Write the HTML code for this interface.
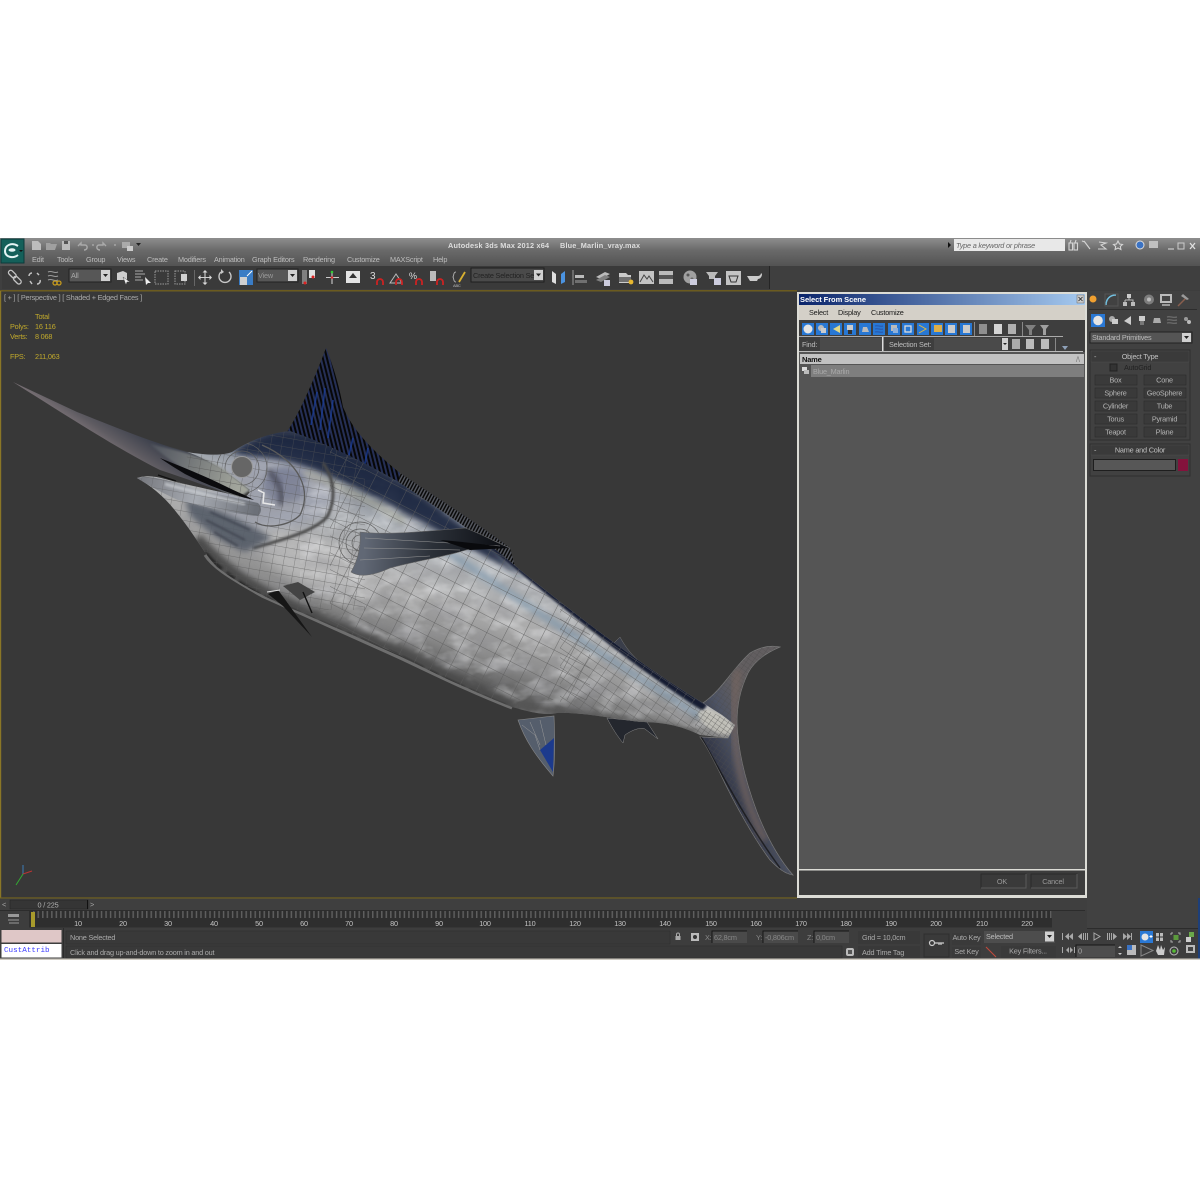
<!DOCTYPE html>
<html><head><meta charset="utf-8"><title>Autodesk 3ds Max 2012</title>
<style>
html,body{margin:0;padding:0;background:#fff;width:1200px;height:1200px;overflow:hidden}
svg{display:block;position:absolute;left:0;top:0;filter:blur(.32px)}
text{font-family:"Liberation Sans",sans-serif;font-size:7.3px;fill:#c4c4c4;letter-spacing:-.2px}
.m{fill:#bdbdbd}.d{fill:#b4b4b4}.c{text-anchor:middle}
.y{fill:#c2aa2c}.g{fill:#8f8f8f}.k{fill:#1a1a1a}
.i{fill:#cfcfcf}.w{fill:#e8e8e8}.b{fill:#2f7fd8}
</style></head><body>
<svg width="1200" height="1200" viewBox="0 0 1200 1200" xmlns="http://www.w3.org/2000/svg">
<defs>
<linearGradient id="tb" x1="0" y1="0" x2="0" y2="1"><stop offset="0" stop-color="#8e8e8e"/><stop offset=".45" stop-color="#696969"/><stop offset="1" stop-color="#535353"/></linearGradient>
<linearGradient id="ttl" x1="0" y1="0" x2="1" y2="0"><stop offset="0" stop-color="#0a246a"/><stop offset="1" stop-color="#a6caf0"/></linearGradient>
<linearGradient id="body" gradientUnits="userSpaceOnUse" x1="400" y1="480" x2="345" y2="640"><stop offset="0" stop-color="#3a4254"/><stop offset=".12" stop-color="#7c8492"/><stop offset=".3" stop-color="#b4b8bc"/><stop offset=".58" stop-color="#ababab"/><stop offset=".82" stop-color="#8a8a8a"/><stop offset="1" stop-color="#575757"/></linearGradient>
<linearGradient id="bill" gradientUnits="userSpaceOnUse" x1="130" y1="425" x2="105" y2="462"><stop offset="0" stop-color="#3c404c"/><stop offset=".45" stop-color="#5f5c62"/><stop offset=".8" stop-color="#857a7e"/><stop offset="1" stop-color="#5f5b5d"/></linearGradient>
<linearGradient id="snout" gradientUnits="userSpaceOnUse" x1="150" y1="445" x2="240" y2="480"><stop offset="0" stop-color="#4e525c"/><stop offset="1" stop-color="#a2a59c"/></linearGradient>
<linearGradient id="jaw" gradientUnits="userSpaceOnUse" x1="140" y1="478" x2="255" y2="510"><stop offset="0" stop-color="#77797f"/><stop offset=".5" stop-color="#a7abb2"/><stop offset="1" stop-color="#6c7078"/></linearGradient>
<linearGradient id="tail" gradientUnits="userSpaceOnUse" x1="715" y1="760" x2="760" y2="740"><stop offset="0" stop-color="#343848"/><stop offset=".5" stop-color="#4d5364"/><stop offset="1" stop-color="#625e60"/></linearGradient>
<linearGradient id="fin" gradientUnits="userSpaceOnUse" x1="365" y1="540" x2="500" y2="550"><stop offset="0" stop-color="#616875"/><stop offset=".5" stop-color="#2b3038"/><stop offset="1" stop-color="#0d0f14"/></linearGradient>
<pattern id="gr" width="17" height="15" patternUnits="userSpaceOnUse" patternTransform="rotate(27 400 560)"><path d="M0 0H17M0 0V15" stroke="#5c5c5c" stroke-width=".8" fill="none"/></pattern>
<pattern id="gr2" width="10" height="8" patternUnits="userSpaceOnUse" patternTransform="rotate(34 600 660)"><path d="M0 0H10M0 0V8" stroke="#606060" stroke-width=".7" fill="none"/></pattern>
<pattern id="gr3" width="5" height="4" patternUnits="userSpaceOnUse" patternTransform="rotate(35 700 710)"><path d="M0 0H5M0 0V4" stroke="#4c4c4c" stroke-width=".6" fill="none"/></pattern>
<pattern id="gh" width="11" height="9" patternUnits="userSpaceOnUse" patternTransform="rotate(10 250 480)"><path d="M0 0H11M0 0V9" stroke="#565656" stroke-width=".7" fill="none"/></pattern>
<pattern id="ha" width="4" height="8" patternUnits="userSpaceOnUse" patternTransform="rotate(-14 350 430)"><rect width="2" height="8" fill="#070707"/><rect x="2" width="2" height="8" fill="#252f55"/></pattern>
<pattern id="ha2" width="3" height="8" patternUnits="userSpaceOnUse" patternTransform="rotate(28 440 500)"><rect width="1.5" height="8" fill="#0a0a0a"/><rect x="1.5" width="1.5" height="8" fill="#54575f"/></pattern>
<pattern id="tk" x="33" y="0" width="4.52" height="8" patternUnits="userSpaceOnUse"><rect width="1.5" height="8" fill="#5e5e5e"/></pattern>
<filter id="b1"><feGaussianBlur stdDeviation="1"/></filter>
<filter id="b3"><feGaussianBlur stdDeviation="3"/></filter>
<filter id="b6"><feGaussianBlur stdDeviation="6"/></filter>
<filter id="mot" x="0" y="0" width="100%" height="100%"><feTurbulence type="fractalNoise" baseFrequency=".04 .07" numOctaves="3" seed="4"/><feColorMatrix values="0 0 0 0 .92  0 0 0 0 .93  0 0 0 0 .95  2.6 0 0 0 -1.05"/></filter>
<filter id="mod" x="0" y="0" width="100%" height="100%"><feTurbulence type="fractalNoise" baseFrequency=".03 .05" numOctaves="3" seed="11"/><feColorMatrix values="0 0 0 0 .3  0 0 0 0 .3  0 0 0 0 .32  2.4 0 0 0 -1"/></filter>
<clipPath id="cb"><path d="M187,452 C205,455 222,456 232,452 C250,440 270,433 290,431 C330,445 370,465 400,483 C440,510 480,535 520,570 C570,610 640,665 703,703 L722,715 L735,725 L728,738 L700,735 C680,725 660,722 640,722 C610,718 580,712 557,713 C545,716 530,712 512,707 C470,690 430,672 400,655 C370,642 335,628 300,612 C270,600 240,585 217,567 C205,555 195,535 177,513 C165,497 150,485 137,478 C145,475 155,476 165,479 C190,486 215,490 245,498 L250,492 L215,470 C200,462 195,456 187,452Z"/></clipPath>
<clipPath id="ctail"><path d="M703,703 C722,690 733,668 750,653 C760,647 770,645 780,647 C768,652 755,660 748,673 C740,690 737,705 737,723 C738,750 745,780 757,812 C768,840 780,860 793,875 C785,874 778,868 770,860 C755,840 735,805 720,773 C712,757 706,745 700,737 L728,738 L735,725Z"/></clipPath>
</defs>

<!-- app chrome -->
<rect x="0" y="238" width="1200" height="722" fill="#3d3d3d"/>
<rect x="0" y="238" width="1200" height="28" fill="url(#tb)"/>
<rect x="0" y="266" width="1200" height="24" fill="#3f3f3f"/>
<rect x="2" y="266" width="768" height="23" fill="#3a3a3a"/>
<rect x="769" y="266" width="1" height="23" fill="#252525"/>
<rect x="0" y="290" width="797" height="1.5" fill="#6b5b1f"/>

<!-- viewport -->
<rect x="0" y="292" width="797" height="606" fill="#383838"/>
<rect x="0" y="291" width="1.2" height="607" fill="#8a7626"/>
<rect x="0" y="897.4" width="797" height="1.3" fill="#76651f"/>
<text x="4" y="300" style="fill:#aaa">[ + ] [ Perspective ] [ Shaded + Edged Faces ]</text>
<text x="35" y="319" class="y">Total</text>
<text x="10" y="329" class="y">Polys:</text><text x="35" y="329" class="y">16 116</text>
<text x="10" y="339" class="y">Verts:</text><text x="35" y="339" class="y">8 068</text>
<text x="10" y="359" class="y">FPS:</text><text x="35" y="359" class="y">211,063</text>
<path d="M23 874V865" stroke="#3c7bb8" fill="none"/><path d="M23 874L32 871" stroke="#b33" fill="none"/><path d="M23 874L16 885" stroke="#3a3" fill="none"/>

<!-- FISH -->
<path d="M287,432 C298,415 312,385 326,348 C333,365 339,385 343,407 C352,428 368,447 400,473 C440,500 480,525 510,548 L490,546 C440,515 380,480 340,455 C320,445 300,437 287,432Z" fill="url(#ha)"/>
<path d="M400,473 C440,500 480,525 510,548 L515,566 C470,530 430,505 398,485Z" fill="url(#ha2)"/>
<g stroke="#1a3fa0" stroke-width="1.800" fill="none" opacity=".7"><path d="M317,392L311,425"/><path d="M325,388L320,430"/><path d="M333,400L328,438"/><path d="M353,438L349,455"/><path d="M368,448L364,468"/></g>
<path d="M500,560 C560,605 640,665 680,690" stroke="#4a4f5a" stroke-width="1" fill="none"/>
<path d="M612,645 L620,637 C628,652 640,665 658,674 L640,672 C630,665 620,655 612,645Z" fill="#3a3e4a" stroke="#777" stroke-width=".5"/>
<path d="M518,720 C525,740 535,755 553,776 C555,760 555,740 554,716Z" fill="#555e6c" stroke="#888" stroke-width=".6"/>
<path d="M540,750 L553,772 L554,738Z" fill="#1c3a8d"/>
<path d="M522,725 L535,735 L540,750 M530,722 L540,745 M540,720 L546,745" stroke="#999" stroke-width=".5" fill="none"/>
<path d="M607,718 C612,728 618,737 623,743 L625,735 C632,730 640,727 645,729 L658,739 L647,722Z" fill="#24272e" stroke="#888" stroke-width=".5"/>
<path d="M205,555 C212,566 225,575 262,596 L400,658 C430,672 470,692 512,708" fill="none" stroke="#6e6e6e" stroke-width="3"/>
<path d="M703,703 C722,690 733,668 750,653 C760,647 770,645 780,647 C768,652 755,660 748,673 C740,690 737,705 737,723 C738,750 745,780 757,812 C768,840 780,860 793,875 C785,874 778,868 770,860 C755,840 735,805 720,773 C712,757 706,745 700,737 L728,738 L735,725Z" fill="url(#tail)" stroke="#7a7a7a" stroke-width=".7"/>
<g clip-path="url(#ctail)"><rect x="690" y="640" width="110" height="240" fill="url(#gr3)"/>
<path d="M738,670 C735,690 733,710 735,735 C737,770 748,810 765,840" stroke="#776660" stroke-width="7" fill="none" filter="url(#b3)" opacity=".7"/>
<path d="M700,735 C720,770 745,820 780,868" stroke="#111" stroke-width="1.500" fill="none" opacity=".7"/></g>
<!-- body -->
<path d="M187,452 C205,455 222,456 232,452 C250,440 270,433 290,431 C330,445 370,465 400,483 C440,510 480,535 520,570 C570,610 640,665 703,703 L722,715 L735,725 L728,738 L700,735 C680,725 660,722 640,722 C610,718 580,712 557,713 C545,716 530,712 512,707 C470,690 430,672 400,655 C370,642 335,628 300,612 C270,600 240,585 217,567 C205,555 195,535 177,513 C165,497 150,485 137,478 C145,475 155,476 165,479 C190,486 215,490 245,498 L250,492 L215,470 C200,462 195,456 187,452Z" fill="url(#body)"/>
<g clip-path="url(#cb)">
 <ellipse cx="275" cy="490" rx="60" ry="40" fill="#a0a4b0" filter="url(#b6)"/>
 <ellipse cx="285" cy="485" rx="22" ry="18" fill="#7e8398" filter="url(#b3)"/>
 <ellipse cx="320" cy="565" rx="65" ry="24" transform="rotate(25 320 565)" fill="#b8b8b8" filter="url(#b6)"/>
 <rect x="300" y="480" width="430" height="260" filter="url(#mot)" opacity=".38"/>
 <rect x="180" y="470" width="550" height="270" filter="url(#mod)" opacity=".42"/>
 <!-- dark back wedge -->
 <path d="M232,452 C260,432 290,428 330,443 L410,488 L480,538 L525,578 L470,548 L400,510 C360,488 320,470 290,462 C270,456 250,458 232,452Z" fill="#1c2640" filter="url(#b3)" opacity=".92"/>
 <path d="M480,535 C560,600 630,660 705,708" fill="none" stroke="#141a30" stroke-width="8" filter="url(#b1)"/>
 <path d="M305,472 C340,486 370,500 405,522" fill="none" stroke="#b2b296" stroke-width="7" filter="url(#b3)" opacity=".4"/>
 <path d="M430,540 C490,580 570,635 700,716" fill="none" stroke="#7f98ad" stroke-width="7" filter="url(#b3)" opacity=".7"/>
 <!-- belly shade -->
 <path d="M195,540 C225,575 262,596 300,612 C335,628 370,642 400,655 C440,675 480,695 512,707" fill="none" stroke="#4c4c4c" stroke-width="16" filter="url(#b3)"/>
 <path d="M205,552 C225,577 262,598 300,614 C335,630 370,644 400,657 C440,677 480,697 512,709" fill="none" stroke="#1e1e1e" stroke-width="3" stroke-dasharray="24 6 10 5" filter="url(#b1)" opacity=".85"/>
 <path d="M520,706 C570,712 640,722 695,733" fill="none" stroke="#555" stroke-width="6" filter="url(#b3)"/>
 <!-- mesh -->
 <rect x="130" y="420" width="235" height="190" fill="url(#gh)" opacity=".8"/>
 <rect x="330" y="440" width="260" height="260" fill="url(#gr)"/>
 <rect x="560" y="600" width="135" height="135" fill="url(#gr2)"/>
 <ellipse cx="716" cy="722" rx="20" ry="9" transform="rotate(30 716 722)" fill="#cfcdc4" filter="url(#b1)" opacity=".7"/>
 <path d="M695,705 L740,725 L728,740 L695,735Z" fill="url(#gr3)"/>
 <!-- gill -->
 <path d="M323,463 C335,480 336,500 327,517 C315,530 290,538 253,548" fill="none" stroke="#484848" stroke-width="3" filter="url(#b1)"/>
 <path d="M262,445 C300,462 312,490 300,515 C290,525 268,530 255,522" fill="none" stroke="#5a5a5a" stroke-width="1.300"/>
 <path d="M185,500 C215,505 250,525 272,538 L245,552 C225,545 205,530 190,515Z" fill="#555b68" filter="url(#b3)" opacity=".9"/>
 <g stroke="#3d424d" stroke-width="1.600" fill="none" filter="url(#b1)"><path d="M210,512 L250,530"/><path d="M206,520 L245,540"/><path d="M214,532 L238,546"/></g>
 <path d="M268,470 C278,480 285,495 280,505" fill="none" stroke="#33333d" stroke-width="3.500" filter="url(#b3)"/>
 <g fill="none" stroke="#5c5c5c" stroke-width=".7"><circle cx="360" cy="543" r="8"/><circle cx="360" cy="543" r="14"/><circle cx="360" cy="543" r="21"/><circle cx="242" cy="468" r="17"/><circle cx="242" cy="468" r="25"/></g>
</g>
<!-- bill -->
<path d="M13,382 L77,412 C110,425 150,442 187,452 C205,458 225,470 250,490 L240,497 C210,488 185,478 160,470 C120,450 70,418 13,382Z" fill="url(#bill)"/>
<path d="M150,444 C175,450 205,456 225,470 L250,490 L240,497 C215,488 185,474 150,444Z" fill="url(#snout)" filter="url(#b1)"/>
<path d="M186,452 C205,456 225,470 250,490 L240,497 C220,490 205,484 190,478Z" fill="url(#gh)"/>
<path d="M160,458 C180,466 205,476 225,486 C235,491 245,495 254,500 C235,496 205,484 185,474 C175,468 167,463 160,458Z" fill="#0b0b0e"/>
<path d="M158,475 L176,481" stroke="#111" stroke-width="1.300" fill="none"/>
<!-- lower jaw -->
<path d="M137,478 C150,475 165,479 195,489 L258,503 C262,507 262,512 258,516 C235,514 205,507 178,500 C160,492 148,485 137,478Z" fill="url(#jaw)"/>
<path d="M165,484 C190,491 215,497 245,504" stroke="#cfd2d6" stroke-width="3" fill="none" filter="url(#b1)" opacity=".7"/>
<path d="M137,478 C150,475 165,479 195,489 L258,503 C262,507 262,512 258,516 C235,514 205,507 178,500 C160,492 148,485 137,478Z" fill="url(#gh)" opacity=".6"/>
<path d="M258,490 L264,493 L263,503 L275,505" stroke="#e8e8e8" stroke-width="1.500" fill="none"/>
<circle cx="242" cy="467" r="10.500" fill="#666" stroke="#9a9a9a" stroke-width="1"/>
<!-- pectoral -->
<path d="M360,532 C385,535 420,532 465,528 C480,533 495,542 510,548 L478,546 C455,555 420,560 390,568 C375,575 360,578 351,572 C358,560 361,546 360,532Z" fill="url(#fin)" stroke="#666" stroke-width=".6"/>
<path d="M365,538 L500,546 M364,548 L460,550 M360,560 L430,556" stroke="#999" stroke-width=".5" fill="none"/>
<path d="M440,540 C465,542 490,545 510,548 L470,550Z" fill="#090a0d"/>
<path d="M283,586 L298,582 L315,592 L300,600Z" fill="#444"/>
<path d="M268,594 L278,590 L284,598 L312,637 L283,606Z" fill="#161616"/>
<path d="M303,592 L312,613" stroke="#111" stroke-width="1.400" fill="none"/>
<path d="M267,592L280,590" stroke="#ddd" stroke-width="1" fill="none"/>

<!-- logo + QAT -->
<rect x="1" y="239" width="23" height="24" fill="#14605a" stroke="#0c3a3a"/>
<path d="M18,246 C12,242 5,245 5,251 C5,257 13,259 18,255" fill="none" stroke="#e4f4f4" stroke-width="2"/><ellipse cx="12" cy="250" rx="3.500" ry="1.800" fill="#e4f4f4"/>
<path d="M19 250h4l-2 2z" fill="#111"/>
<path d="M32 241h6l3 3v6H32z" fill="#bdbdbd"/><path d="M46 243h4l1 1h6l-2 6H46z" fill="#a0a0a0"/><path d="M62 241h8v9H62z" fill="#bbb"/><rect x="64" y="241" width="4" height="3" fill="#555"/>
<path d="M78 246l3-3v2h4c3 0 3 5-1 5" fill="none" stroke="#aaa" stroke-width="1.400"/><path d="M92 245h2" stroke="#bbb"/>
<path d="M106 246l-3-3v2h-4c-3 0-3 5 1 5" fill="none" stroke="#aaa" stroke-width="1.400"/><path d="M114 245h2" stroke="#bbb"/>
<rect x="122" y="242" width="8" height="6" fill="#aaa"/><rect x="127" y="246" width="6" height="5" fill="#ccc"/>
<path d="M136 243h5l-2.500 3z" fill="#222"/>
<text x="448" y="248" style="font-weight:bold;fill:#dedede;letter-spacing:0" textLength="101">Autodesk 3ds Max  2012 x64</text>
<text x="560" y="248" style="font-weight:bold;fill:#dedede;letter-spacing:0" textLength="80">Blue_Marlin_vray.max</text>
<path d="M948 242l3 3-3 3z" fill="#111"/>
<rect x="954" y="239" width="111" height="12" fill="#e8e8e8"/>
<text x="956" y="248" style="font-style:italic;fill:#666">Type a keyword or phrase</text>
<g fill="none" stroke="#d4d4d4" stroke-width="1.100"><rect x="1069" y="243" width="3.500" height="7"/><rect x="1074" y="243" width="3.500" height="7"/><path d="M1070 243l1-3M1075 243l1-3"/><path d="M1084 241l3 4 3 4M1082 241l3 1"/><path d="M1099 242l7 1-5 2 5 4h-8"/><path d="M1118 241l1.500 3 3 .500-2.200 2 .6 3-2.900-1.500-2.900 1.500 .6-3-2.200-2 3-.500z"/></g>
<circle cx="1140" cy="245" r="4" fill="#3b73c4" stroke="#ddd"/><rect x="1149" y="241" width="9" height="7" fill="#c0c0c0"/>
<path d="M1168 249h6" stroke="#ccc" stroke-width="1.200"/><rect x="1178" y="243" width="6" height="6" fill="none" stroke="#ccc"/><path d="M1190 243l5 6m0-6l-5 6" stroke="#e0e0e0" stroke-width="1.300"/>
<text x="32" y="262" class="m">Edit</text><text x="57" y="262" class="m">Tools</text><text x="86" y="262" class="m">Group</text><text x="117" y="262" class="m">Views</text><text x="147" y="262" class="m">Create</text><text x="178" y="262" class="m">Modifiers</text><text x="214" y="262" class="m">Animation</text><text x="252" y="262" class="m">Graph Editors</text><text x="303" y="262" class="m">Rendering</text><text x="347" y="262" class="m">Customize</text><text x="390" y="262" class="m">MAXScript</text><text x="433" y="262" class="m">Help</text>

<!-- main toolbar -->
<g fill="none" stroke="#c4c4c4" stroke-width="1.300">
<rect x="8" y="272" width="9" height="4.500" rx="2.200" transform="rotate(45 12.500 274)"/>
<rect x="13" y="278" width="9" height="4.500" rx="2.200" transform="rotate(45 17.500 280)"/>
<path d="M29 276a3 3 0 0 1 3-3m8 7a3 3 0 0 1-3 4m-7-3l2 3m7-9l-2-2" stroke-width="1.500"/>
<path d="M48 272c4-2 6 2 10 0m-10 4c4-2 6 2 10 0m-10 4c4-2 6 2 10 0" stroke="#9a9a9a" stroke-width="1"/><circle cx="55" cy="283" r="2" stroke="#c69a1d"/><circle cx="59" cy="283" r="2" stroke="#c69a1d"/>
</g>
<rect x="69" y="269" width="42" height="13" fill="#575757" stroke="#222"/><text x="71" y="278" style="fill:#aaa">All</text><rect x="101" y="270" width="9" height="11" fill="#d0d0d0"/><path d="M103 274h5l-2.500 3z" fill="#222"/>
<path d="M117 273l6-2 4 2v7h-10z" fill="#cfcfcf"/><path d="M123 277l3 8 1-3 3 0z" fill="#eee" stroke="#333" stroke-width=".4"/>
<path d="M135 271h8M135 274h10M135 277h6M135 280h8" stroke="#aaa" stroke-width="1"/><path d="M145 277l1 8 2-2 3 0z" fill="#eee"/>
<rect x="155" y="271" width="13" height="13" fill="none" stroke="#999" stroke-dasharray="1.500 1"/>
<rect x="175" y="271" width="10" height="13" fill="none" stroke="#999" stroke-dasharray="1.500 1"/><rect x="181" y="274" width="6" height="7" fill="#d0d0d0"/>
<rect x="194" y="270" width="1" height="16" fill="#666"/>
<path d="M205 272v11M200 277.500h11" stroke="#d0d0d0" stroke-width="1.100"/><path d="M205 270l2.500 2.500h-5zM205 285l2.500-2.500h-5zM198 277.500l2.500-2.500v5zM212 277.500l-2.500-2.500v5z" fill="#d8d8d8"/>
<path d="M229 272a6 6 0 1 1-8 0" fill="none" stroke="#c8c8c8" stroke-width="1.400"/><path d="M221 269l3 3-3 2z" fill="#c8c8c8"/>
<rect x="239" y="270" width="14" height="15" fill="#3a7cc5"/><rect x="240" y="277" width="7" height="8" fill="#d0d0d0"/><path d="M247 276l5-5" stroke="#fff"/>
<rect x="257" y="269" width="41" height="13" fill="#575757" stroke="#222"/><text x="258" y="278" style="fill:#999">View</text><rect x="288" y="270" width="9" height="11" fill="#d0d0d0"/><path d="M290 274h5l-2.500 3z" fill="#222"/>
<rect x="302" y="270" width="5" height="14" fill="#808080"/><rect x="309" y="270" width="6" height="8" fill="#e0e0e0"/><circle cx="305" cy="283" r="1.500" fill="#d22"/><circle cx="313" cy="277" r="1.500" fill="#d22"/>
<path d="M332 271v13M326 277.500h13" stroke="#ccc" stroke-width="1.100"/><circle cx="332" cy="272" r="1.300" fill="#3c3"/><circle cx="332" cy="277.500" r="1.300" fill="#d33"/>
<rect x="346" y="271" width="14" height="12" fill="#e4e4e4"/><path d="M353 273l4 5h-8z" fill="#333"/>
<text x="370" y="279" style="font-size:10px;fill:#ddd">3</text>
<path d="M377 285v-3a3 3 0 0 1 6 0v3" fill="none" stroke="#c22" stroke-width="1.800"/>
<path d="M390 283l6-9 6 9z" fill="none" stroke="#bbb"/><path d="M396 285v-3a3 3 0 0 1 6 0v3" fill="none" stroke="#c22" stroke-width="1.800"/>
<text x="409" y="279" style="font-size:9px;fill:#ddd">%</text><path d="M416 285v-3a3 3 0 0 1 6 0v3" fill="none" stroke="#c22" stroke-width="1.800"/>
<rect x="430" y="271" width="6" height="10" fill="#bbb"/><path d="M437 285v-3a3 3 0 0 1 6 0v3" fill="none" stroke="#c22" stroke-width="1.800"/>
<path d="M456 272c-3 0-2 4-3 5 1 1 0 5 3 5" fill="none" stroke="#aaa"/><path d="M459 282l6-10" stroke="#d8b030" stroke-width="1.800"/><text x="453" y="287" style="font-size:4px;fill:#bbb">ABC</text>
<rect x="471" y="268" width="73" height="14" fill="#4a4a4a" stroke="#1e1e1e"/><text x="473" y="278" style="fill:#222">Create Selection Se</text><rect x="534" y="270" width="9" height="10" fill="#d0d0d0"/><path d="M536 273.500h5l-2.500 3z" fill="#222"/>
<path d="M552 271l4 3v10l-4-2z" fill="#dedede"/><path d="M565 271l-4 3v10l4-2z" fill="#4b93e0"/>
<path d="M573 270v15" stroke="#999"/><rect x="575" y="275" width="9" height="3" fill="#bbb"/><rect x="575" y="280" width="12" height="3" fill="#707070"/>
<path d="M596 277l9-5 5 2-9 5z" fill="#bbb"/><path d="M596 280l9-5 5 2-9 5z" fill="#808080"/><rect x="604" y="280" width="6" height="6" fill="#ccd"/>
<path d="M619 273h7l2 2h3v8h-12z" fill="#ccc"/><rect x="619" y="277" width="12" height="5" fill="#707070"/><circle cx="631" cy="282" r="2.400" fill="#e8b830"/>
<rect x="639" y="271" width="15" height="13" fill="#c4c4c4"/><path d="M640 282l4-7 3 4 2-3 4 6" fill="none" stroke="#444"/>
<rect x="659" y="271" width="14" height="13" fill="#bbb"/><rect x="659" y="275" width="14" height="4" fill="#555"/>
<circle cx="690" cy="277" r="6.500" fill="#a0a0a0"/><circle cx="688" cy="275" r="1.500" fill="#555"/><circle cx="692" cy="279" r="1.500" fill="#666"/><rect x="690" y="279" width="7" height="6" fill="#ccd"/>
<path d="M706 272l12 0-3 4v3h-6v-3z" fill="#bbb"/><rect x="714" y="278" width="7" height="7" fill="#ccd"/>
<rect x="726" y="271" width="15" height="14" fill="#c4c4c4"/><path d="M729 276h9l-2 6h-5z" fill="none" stroke="#333"/>
<path d="M747 276h11c2 0 3-2 3-3l1 1c0 3-2 5-4 5l-1 2h-7z" fill="#ccc"/>

<!-- Dialog -->
<rect x="797" y="292" width="290" height="606" fill="#dcdcd6"/>
<rect x="799" y="294" width="286" height="11" fill="url(#ttl)"/>
<text x="800" y="302" style="font-weight:bold;fill:#fff;font-size:7.500px;letter-spacing:0" textLength="66">Select From Scene</text>
<rect x="1077" y="295" width="7" height="8" fill="#ccc" stroke="#666" stroke-width=".5"/><path d="M1078.500 297l4 4m0-4l-4 4" stroke="#222" stroke-width=".8"/>
<rect x="799" y="305" width="286" height="15" fill="#d4d0c8"/>
<text x="809" y="315" class="k">Select</text><text x="838" y="315" class="k">Display</text><text x="871" y="315" class="k">Customize</text>
<rect x="799" y="320" width="286" height="549" fill="#3e3e3e"/>
<rect x="799" y="352" width="286" height="517" fill="#555"/>
<g fill="#2878d4">
<rect x="802" y="323" width="12" height="12"/><rect x="816" y="323" width="12" height="12"/><rect x="830" y="323" width="12" height="12"/><rect x="844" y="323" width="12" height="12"/><rect x="859" y="323" width="12" height="12"/><rect x="873" y="323" width="12" height="12"/><rect x="888" y="323" width="12" height="12"/><rect x="902" y="323" width="12" height="12"/><rect x="917" y="323" width="12" height="12"/><rect x="931" y="323" width="12" height="12"/><rect x="945" y="323" width="12" height="12"/><rect x="960" y="323" width="12" height="12"/>
</g>
<circle cx="808" cy="329" r="4.500" fill="#e4e4e4"/>
<circle cx="821" cy="328" r="3" fill="#bbb"/><rect x="821" y="328" width="5" height="5" fill="#ccc"/>
<path d="M833 329l7-4v8z" fill="#e0d888"/>
<rect x="847" y="325" width="6" height="5" fill="#ccc"/><rect x="848" y="330" width="4" height="4" fill="#333"/>
<path d="M862 332h7l-2-5h-4z" fill="#bbb"/>
<path d="M875 326c3-1 5 1 8 0M875 329c3-1 5 1 8 0M875 332c3-1 5 1 8 0" stroke="#2b55a8" fill="none"/>
<rect x="891" y="325" width="6" height="6" fill="#bbb"/><rect x="893" y="328" width="5" height="5" fill="#8fb0da"/>
<rect x="905" y="326" width="6" height="6" fill="none" stroke="#ddd" stroke-width="1.300"/>
<path d="M919 325l7 4-7 4" fill="none" stroke="#e0b840"/>
<rect x="934" y="325" width="8" height="7" fill="#dcae48"/>
<rect x="948" y="325" width="7" height="8" fill="#ccc"/>
<rect x="963" y="325" width="7" height="8" fill="#ccc"/>
<rect x="974" y="322" width="1" height="14" fill="#888"/>
<rect x="979" y="324" width="8" height="10" fill="#8f8f8f"/><rect x="994" y="324" width="8" height="10" fill="#d4d4d4"/><rect x="1008" y="324" width="8" height="10" fill="#b0b0b0"/>
<rect x="1022" y="322" width="1" height="14" fill="#888"/>
<path d="M1025 325h11l-4 5v5h-3v-5z" fill="#808080"/><path d="M1040 325h9l-3 4v6h-3v-6z" fill="#a0a0a0"/>
<rect x="799" y="336" width="264" height="1" fill="#aaa"/>
<text x="802" y="347" class="m">Find:</text>
<rect x="820" y="338" width="62" height="12" fill="#4a4a4a"/><rect x="882" y="337" width="1.500" height="14" fill="#ddd"/>
<text x="889" y="347" class="m">Selection Set:</text>
<rect x="934" y="338" width="67" height="12" fill="#4a4a4a"/><rect x="1002" y="338" width="6" height="12" fill="#d0d0d0"/><path d="M1003 343h4l-2 2z" fill="#222"/>
<rect x="1012" y="339" width="8" height="10" fill="#aaa"/><rect x="1026" y="339" width="8" height="10" fill="#bbb"/><rect x="1041" y="339" width="8" height="10" fill="#bbb"/>
<rect x="1055" y="338" width="1" height="13" fill="#888"/><path d="M1062 346h6l-3 4z" fill="#8ea0b8"/>
<rect x="799" y="351" width="284" height="1" fill="#bbb"/>
<rect x="800" y="354" width="284" height="10" fill="#c2c2c2"/><text x="802" y="362" style="font-weight:bold;fill:#111;font-size:7.500px">Name</text><text x="1076" y="362" style="fill:#777">/\</text>
<rect x="811" y="365" width="273" height="12" fill="#7e7e7e"/><rect x="800" y="365" width="11" height="12" fill="#555"/>
<rect x="802" y="367" width="5" height="4" fill="#ddd"/><rect x="804" y="370" width="5" height="4" fill="#bbb"/>
<text x="813" y="374" style="fill:#aaa">Blue_Marlin</text>
<rect x="799" y="869" width="286" height="1.500" fill="#dcdcd6"/>
<rect x="799" y="870.500" width="286" height="24.500" fill="#3c3c3c"/>
<rect x="981" y="874" width="45" height="14" fill="#3a3a3a" stroke="#2a2a2a"/><path d="M1026 874v14h-45" stroke="#5a5a5a" fill="none"/><text x="1002" y="884" class="c" style="fill:#999">OK</text>
<rect x="1031" y="874" width="46" height="14" fill="#3a3a3a" stroke="#2a2a2a"/><path d="M1077 874v14h-46" stroke="#5a5a5a" fill="none"/><text x="1053" y="884" class="c" style="fill:#999">Cancel</text>

<!-- command panel -->
<rect x="1087" y="291" width="113" height="637" fill="#414141"/>
<circle cx="1093" cy="299" r="3.500" fill="#f0a030"/>
<path d="M1106 305c0-6 4-10 10-10" fill="none" stroke="#72c0e0" stroke-width="1.500"/><rect x="1105" y="294" width="13" height="12" fill="none" stroke="#555"/>
<rect x="1127" y="294" width="4" height="4" fill="#ccc"/><rect x="1123" y="302" width="4" height="4" fill="#bbb"/><rect x="1131" y="302" width="4" height="4" fill="#bbb"/><path d="M1129 298v2m-4 0h8v2m-8-2v2" stroke="#bbb" fill="none"/>
<circle cx="1149" cy="299.500" r="5" fill="#7c7c7c"/><circle cx="1149" cy="299.500" r="2" fill="#bbb"/>
<rect x="1160" y="294" width="12" height="9" fill="#bbb"/><rect x="1162" y="296" width="8" height="5" fill="#444"/><rect x="1162" y="304" width="8" height="2" fill="#999"/>
<path d="M1178 306l8-8" stroke="#8a5f4e" stroke-width="1.500"/><path d="M1183 294l6 5-2 1-6-4z" fill="#999"/>
<rect x="1089" y="309" width="108" height="1" fill="#2d2d2d"/>
<rect x="1091" y="314" width="14" height="13" fill="#2a78d4"/><circle cx="1098" cy="320.500" r="4.800" fill="#e4e4e4"/>
<circle cx="1112" cy="319" r="3" fill="#aaa"/><rect x="1112" y="319" width="6" height="5" fill="#ccc"/>
<path d="M1124 321l7-5v9z" fill="#ccc"/><rect x="1139" y="316" width="6" height="5" fill="#ccc"/><rect x="1140" y="321" width="4" height="4" fill="#777"/>
<path d="M1153 323h8l-1-5h-6z" fill="#aaa"/>
<path d="M1167 317c3-1 6 1 10 0M1167 320c3-1 6 1 10 0M1167 323c3-1 6 1 10 0" stroke="#777" fill="none"/>
<circle cx="1186" cy="319" r="2" fill="#999"/><circle cx="1189" cy="322" r="2" fill="#bbb"/>
<rect x="1090" y="332" width="102" height="11" fill="#555" stroke="#222"/><text x="1092" y="340" style="fill:#bbb">Standard Primitives</text><rect x="1182" y="333" width="9" height="9" fill="#d0d0d0"/><path d="M1184 336h5l-2.500 3z" fill="#222"/>
<rect x="1090" y="350" width="100" height="90" fill="none" stroke="#2f2f2f"/>
<rect x="1091" y="351" width="98" height="11" fill="#3a3a3a" stroke="#4d4d4d" stroke-width=".5"/><text x="1094" y="359" style="fill:#bbb">-</text><text x="1140" y="359" class="c" style="fill:#c0c0c0">Object Type</text>
<rect x="1110" y="364" width="7" height="7" fill="#333" stroke="#222"/><text x="1124" y="370" style="fill:#222">AutoGrid</text>
<g fill="#3a3a3a" stroke="#2c2c2c" stroke-width=".6">
<rect x="1095" y="375" width="42" height="10"/><rect x="1144" y="375" width="42" height="10"/>
<rect x="1095" y="388" width="42" height="10"/><rect x="1144" y="388" width="42" height="10"/>
<rect x="1095" y="401" width="42" height="10"/><rect x="1144" y="401" width="42" height="10"/>
<rect x="1095" y="414" width="42" height="10"/><rect x="1144" y="414" width="42" height="10"/>
<rect x="1095" y="427" width="42" height="10"/><rect x="1144" y="427" width="42" height="10"/>
</g>
<text x="1115.500" y="382.500" class="c d">Box</text><text x="1164.500" y="382.500" class="c d">Cone</text>
<text x="1115.500" y="395.500" class="c d">Sphere</text><text x="1164.500" y="395.500" class="c d">GeoSphere</text>
<text x="1115.500" y="408.500" class="c d">Cylinder</text><text x="1164.500" y="408.500" class="c d">Tube</text>
<text x="1115.500" y="421.500" class="c d">Torus</text><text x="1164.500" y="421.500" class="c d">Pyramid</text>
<text x="1115.500" y="434.500" class="c d">Teapot</text><text x="1164.500" y="434.500" class="c d">Plane</text>
<rect x="1090" y="444" width="100" height="32" fill="none" stroke="#2f2f2f"/>
<rect x="1091" y="445" width="98" height="10" fill="#3a3a3a" stroke="#4d4d4d" stroke-width=".5"/><text x="1094" y="452.500" style="fill:#bbb">-</text><text x="1140" y="452.500" class="c" style="fill:#c0c0c0">Name and Color</text>
<rect x="1093.500" y="459.500" width="82" height="11" fill="#575757" stroke="#1e1e1e"/>
<rect x="1178" y="459" width="10" height="12" fill="#84123c"/>
<rect x="1087" y="928" width="113" height="1" fill="#2c2c2c"/>
<rect x="1198" y="898" width="2" height="62" fill="#1d3f7a"/>

<!-- time slider -->
<rect x="0" y="898.500" width="1087" height="11.500" fill="#3f3f3f"/>
<text x="2" y="907" style="fill:#aaa">&lt;</text>
<rect x="10" y="900" width="78" height="9" fill="#353535" stroke="#222" stroke-width=".5"/><text x="48" y="907.500" class="c" style="fill:#b0b0b0">0 / 225</text>
<path d="M87.500 900v9" stroke="#111"/>
<text x="90" y="907" style="fill:#aaa">&gt;</text>
<rect x="0" y="910" width="1085" height="1" fill="#2c2c2c"/>
<rect x="29" y="911" width="1023" height="16.500" fill="#2e2e2e"/>
<rect x="33" y="911" width="1019" height="7" fill="url(#tk)"/>
<rect x="8" y="914" width="11" height="3" fill="#999"/><path d="M8 920h11M9 923h10" stroke="#999"/>
<rect x="31" y="912" width="4" height="15" fill="#a89b2c"/>
<text x="78" y="926" class="c">10</text><text x="123" y="926" class="c">20</text><text x="168" y="926" class="c">30</text><text x="214" y="926" class="c">40</text><text x="259" y="926" class="c">50</text><text x="304" y="926" class="c">60</text><text x="349" y="926" class="c">70</text><text x="394" y="926" class="c">80</text><text x="439" y="926" class="c">90</text><text x="485" y="926" class="c">100</text><text x="530" y="926" class="c">110</text><text x="575" y="926" class="c">120</text><text x="620" y="926" class="c">130</text><text x="665" y="926" class="c">140</text><text x="711" y="926" class="c">150</text><text x="756" y="926" class="c">160</text><text x="801" y="926" class="c">170</text><text x="846" y="926" class="c">180</text><text x="891" y="926" class="c">190</text><text x="936" y="926" class="c">200</text><text x="982" y="926" class="c">210</text><text x="1027" y="926" class="c">220</text>

<!-- status -->
<rect x="1.500" y="930" width="60" height="12.500" fill="#dfc7c7"/>
<rect x="1.500" y="944" width="60" height="13.500" fill="#fff"/>
<text x="4" y="952" style="font-family:'Liberation Mono',monospace;fill:#3b3bff;font-size:7.600px;letter-spacing:0">CustAttrib</text>
<rect x="63" y="928" width="1" height="30" fill="#2b2b2b"/>
<rect x="66" y="931" width="604" height="13" fill="#393939" stroke="#2c2c2c" stroke-width=".5"/>
<text x="70" y="940" style="fill:#aaa">None Selected</text>
<rect x="66" y="946" width="776" height="12" fill="#393939" stroke="#2c2c2c" stroke-width=".5"/>
<text x="70" y="955" style="fill:#aaa">Click and drag up-and-down to zoom in and out</text>
<rect x="675.500" y="936" width="5" height="4" fill="#aaa"/><path d="M676.500 936v-1.500a1.500 1.500 0 0 1 3 0v1.500" fill="none" stroke="#aaa"/>
<rect x="691" y="933" width="8" height="8" fill="#bbb"/><circle cx="695" cy="937" r="2" fill="#333"/>
<text x="705" y="940" style="fill:#888">X:</text><rect x="712" y="931" width="35" height="12" fill="#4a4a4a"/><path d="M712 943v-12h35" fill="none" stroke="#151515"/><text x="714" y="940" style="fill:#888">62,8cm</text>
<text x="756" y="940" style="fill:#888">Y:</text><rect x="763" y="931" width="35" height="12" fill="#4a4a4a"/><path d="M763 943v-12h35" fill="none" stroke="#151515"/><text x="765" y="940" style="fill:#888">-0,806cm</text>
<text x="807" y="940" style="fill:#888">Z:</text><rect x="814" y="931" width="35" height="12" fill="#4a4a4a"/><path d="M814 943v-12h35" fill="none" stroke="#151515"/><text x="816" y="940" style="fill:#888">0,0cm</text>
<rect x="858" y="931" width="62" height="13" fill="#393939"/><text x="862" y="940" style="fill:#aaa">Grid = 10,0cm</text>
<rect x="846" y="948" width="8" height="8" fill="#bbb" rx="2"/><rect x="848" y="950" width="4" height="4" fill="#555"/>
<rect x="858" y="946" width="62" height="12" fill="#393939"/><text x="862" y="955" style="fill:#aaa">Add Time Tag</text>
<rect x="924" y="934" width="25" height="23" fill="#3a3a3a" stroke="#2e2e2e"/><circle cx="932" cy="943" r="2.500" fill="none" stroke="#ccc" stroke-width="1.200"/><path d="M934 943h10m-3 0v2m-2-2v2" stroke="#ccc" stroke-width="1.200" fill="none"/>
<rect x="952" y="933" width="29" height="12" fill="#3a3a3a"/><text x="966.500" y="940" class="c" style="fill:#aaa">Auto Key</text>
<rect x="984" y="931" width="71" height="12" fill="#4d4d4d"/><text x="986" y="939" style="fill:#bbb">Selected</text><rect x="1045" y="931.500" width="9" height="10" fill="#d0d0d0"/><path d="M1047 935h5l-2.500 3z" fill="#222"/>
<rect x="952" y="947" width="29" height="11" fill="#3a3a3a"/><text x="966.500" y="954" class="c" style="fill:#aaa">Set Key</text>
<path d="M986 947l10 10" stroke="#c24a3c" stroke-width="1.100"/>
<rect x="1001" y="946" width="55" height="12" fill="#3a3a3a"/><text x="1028" y="953.500" class="c" style="fill:#aaa">Key Filters...</text>
<g fill="#a8a8a8">
<path d="M1062 933v7h1v-7zM1069 933l-4 3.500 4 3.500zM1073 933l-4 3.500 4 3.500z"/>
<path d="M1082 933l-4 3.500 4 3.500zM1083 933h1v7h-1zM1085 933h1v7h-1zM1087 933h1v7h-1z"/>
<path d="M1094 933l6 3.500-6 3.500z" fill="none" stroke="#a8a8a8"/>
<path d="M1107 933h1v7h-1zM1109 933h1v7h-1zM1111 933h1v7h-1zM1113 933l4 3.500-4 3.500z"/>
<path d="M1123 933l4 3.500-4 3.500zM1127 933l4 3.500-4 3.500zM1131 933h1v7h-1z"/>
<path d="M1062 947v6h1v-6zM1069 947l-3 3 3 3zM1070 947l3 3-3 3zM1074 947h1v6h-1z"/>
</g>
<rect x="1076" y="945" width="39" height="12" fill="#4d4d4d"/><path d="M1076 957v-12h39" fill="none" stroke="#161616"/><text x="1078" y="953.500" style="fill:#aaa">0</text>
<path d="M1118 948l2-2 2 2zM1118 953l2 2 2-2z" fill="#ccc"/>
<rect x="1127" y="945" width="9" height="10" fill="#bbb"/><rect x="1127" y="945" width="5" height="5" fill="#3b73c4"/>
<path d="M1141 945l12 5.500-12 5.500z" fill="none" stroke="#888"/>
<path d="M1156 951l2-6 2 5 1-5 2 5 2-3-1 8h-6z" fill="#ccc"/>
<circle cx="1174" cy="951" r="4" fill="none" stroke="#bbb"/><circle cx="1174" cy="951" r="1.800" fill="#5b3"/>
<rect x="1186" y="945" width="9" height="8" fill="#bbb"/><rect x="1188" y="947" width="5" height="4" fill="#444"/>
<rect x="1140" y="931" width="13" height="12" fill="#2a78d4"/><circle cx="1145" cy="937" r="3.500" fill="#e4e4e4"/><path d="M1151 935v3m-1.500-1.500h3" stroke="#fff"/>
<rect x="1156" y="933" width="7" height="8" fill="#bbb"/><path d="M1159.500 933v8M1156 937h7" stroke="#333"/>
<path d="M1171 933h2m5 0h2v2m0 5v2h-2m-5 0h-2v-2m0-5v-2" fill="none" stroke="#aaa"/><rect x="1173.500" y="935" width="5" height="5" fill="#5b9a3c"/>
<rect x="1186" y="937" width="5" height="5" fill="#ccc"/><rect x="1189" y="932" width="5" height="5" fill="#6aa84a"/>
<rect x="0" y="958.500" width="1200" height="1.500" fill="#cfcbc2"/>
</svg>
</body></html>
